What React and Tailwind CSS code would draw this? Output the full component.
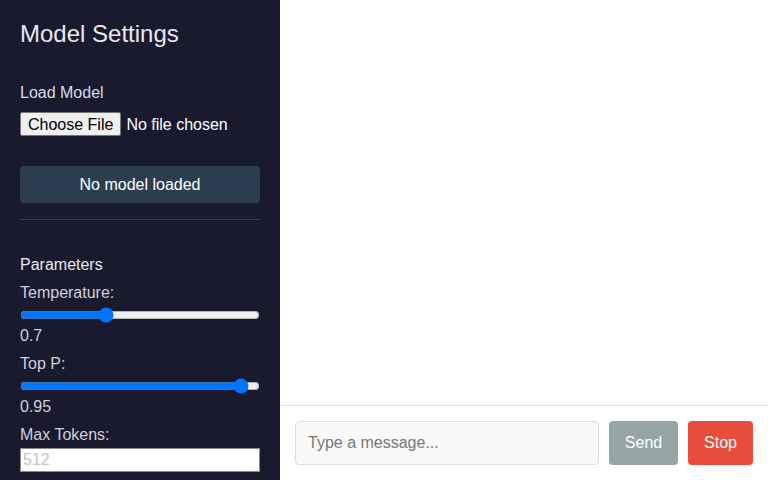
import React, {useState} from 'react'

const Sidebar = () => {
  const [temp, setTemp] = useState(0.7)
  const [topP, setTopP] = useState(0.95)

  return (
    <div className="w-[280px] shrink-0 h-full bg-[#1a1a2e] text-[#e8e8ee] px-5 pt-5 overflow-hidden">
      <h2 className="text-[24px] leading-[28px] mb-[36px]">Model Settings</h2>

      <div className="text-[16px] leading-[18px] mb-[10px] text-[#dcdce4]">Load Model</div>
      <input
        type="file"
        className="block h-[24px] text-[16px] text-white file:mr-[5px] file:h-[24px] file:px-[7px] file:rounded-[2px] file:border file:border-solid file:border-[#767676] file:bg-[#efefef] file:text-black file:text-[16px]"
      />

      <button className="mt-[30px] w-full h-[37px] rounded bg-[#2c3e50] text-[16px] text-white">
        No model loaded
      </button>

      <div className="mt-4 border-t border-[#3a3c50]" />

      <div className="mt-[36px] text-[16px] leading-[18px]">Parameters</div>
      <div className="mt-[10px] text-[16px] leading-[18px] text-[#cfd0d8]">Temperature:</div>
      <input
        type="range" min="0" max="2" step="0.1" value={temp}
        onChange={e => setTemp(e.target.value)}
        className="block w-full m-0 mt-[5px]"
      />
      <div className="mt-[4px] text-[16px] leading-[18px] text-[#cfd0d8]">{temp}</div>
      <div className="mt-[10px] text-[16px] leading-[18px] text-[#cfd0d8]">Top P:</div>
      <input
        type="range" min="0" max="1" step="0.05" value={topP}
        onChange={e => setTopP(e.target.value)}
        className="block w-full m-0 mt-[5px]"
      />
      <div className="mt-[4px] text-[16px] leading-[18px] text-[#cfd0d8]">{topP}</div>
      <div className="mt-[10px] text-[16px] leading-[18px] text-[#cfd0d8]">Max Tokens:</div>
      <input
        type="number" placeholder="512"
        className="mt-[4px] w-full h-[24px] bg-white border border-[#888] px-[2px] text-[16px] text-black placeholder:text-[#c4c4c4]"
      />
    </div>
  )
}

export default function App() {
  return (
    <div className="w-[768px] h-[480px] flex font-['Liberation_Sans',Arial,sans-serif]">
      <Sidebar />
      <div className="flex-1 flex flex-col bg-white">
        <div className="flex-1" />
        <div className="border-t border-[#e0e0e0] px-[15px] pt-[15px] pb-[15px] flex gap-[10px]">
          <input
            type="text" placeholder="Type a message..."
            className="flex-1 h-[44px] rounded border border-[#ddd] bg-[#f9f9f9] px-3 text-[16px] placeholder:text-[#777] outline-none"
          />
          <button className="h-[44px] w-[69px] rounded bg-[#95a5a6] text-white text-[16px]">Send</button>
          <button className="h-[44px] w-[65px] rounded bg-[#e74c3c] text-white text-[16px]">Stop</button>
        </div>
      </div>
    </div>
  )
}
